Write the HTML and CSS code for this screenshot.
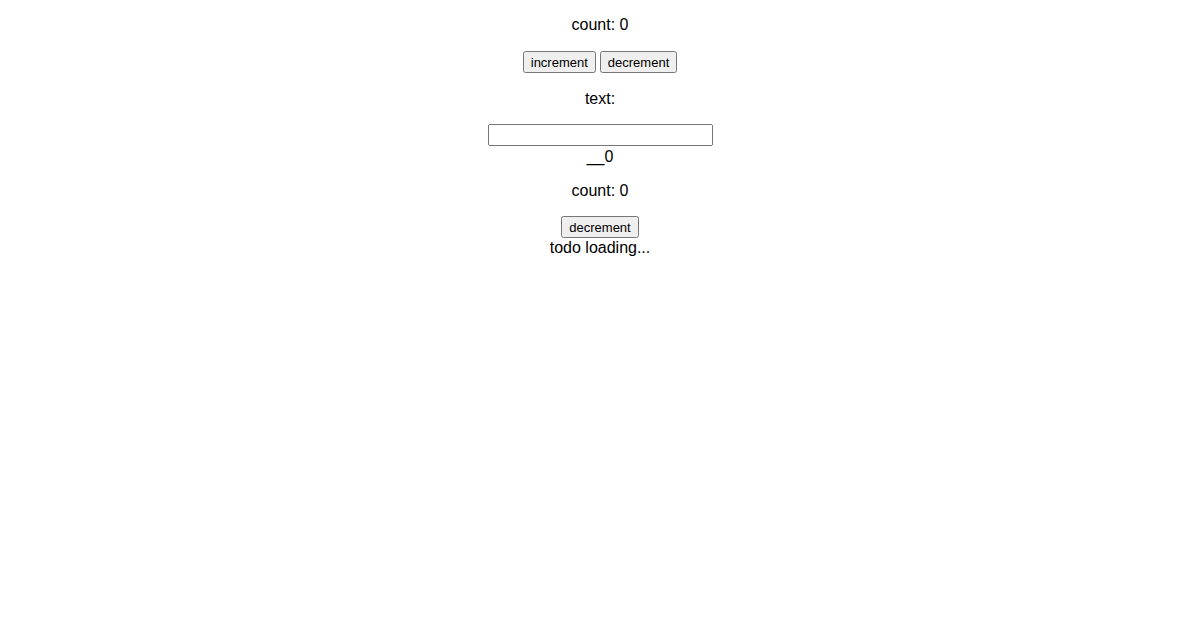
FILE: index.html
```html
<!DOCTYPE html>
<html>
<head>
<meta charset="utf-8">
<link rel="stylesheet" href="styles.css">
</head>
<body>
<div class="app">
  <p class="line">count: 0</p>
  <div class="row row-a"><button class="btn">increment</button><button class="btn">decrement</button></div>
  <p class="line">text:</p>
  <div class="row row-input"><input class="input" type="text"></div>
  <div class="line">__0</div>
  <p class="line">count: 0</p>
  <div class="row row-b"><button class="btn">decrement</button></div>
  <div class="line">todo loading...</div>
</div>
</body>
</html>
```
FILE: styles.css
```css
body {
  margin: 0;
  padding: 0 8px;
  font-family: "Liberation Sans", Arial, sans-serif;
  font-size: 16px;
  color: #000;
  background: #fff;
}
.app {
  text-align: center;
}
.line {
  line-height: 18px;
}
p.line {
  margin: 16px 0;
}
.row {
  display: flex;
  justify-content: center;
  align-items: flex-start;
  gap: 4px;
}
.row-a {
  height: 24px;
}
.row-a .btn {
  margin-top: 1px;
}
.row-input {
  height: 24px;
}
.row-b {
  height: 23px;
}
.btn {
  box-sizing: border-box;
  height: 22px;
  margin: 0;
  font-family: "Liberation Sans", Arial, sans-serif;
  font-size: 13px;
}
.input {
  box-sizing: border-box;
  width: 225px;
  height: 22px;
  margin: 0;
  font-family: "Liberation Sans", Arial, sans-serif;
  font-size: 13.333px;
}
```
